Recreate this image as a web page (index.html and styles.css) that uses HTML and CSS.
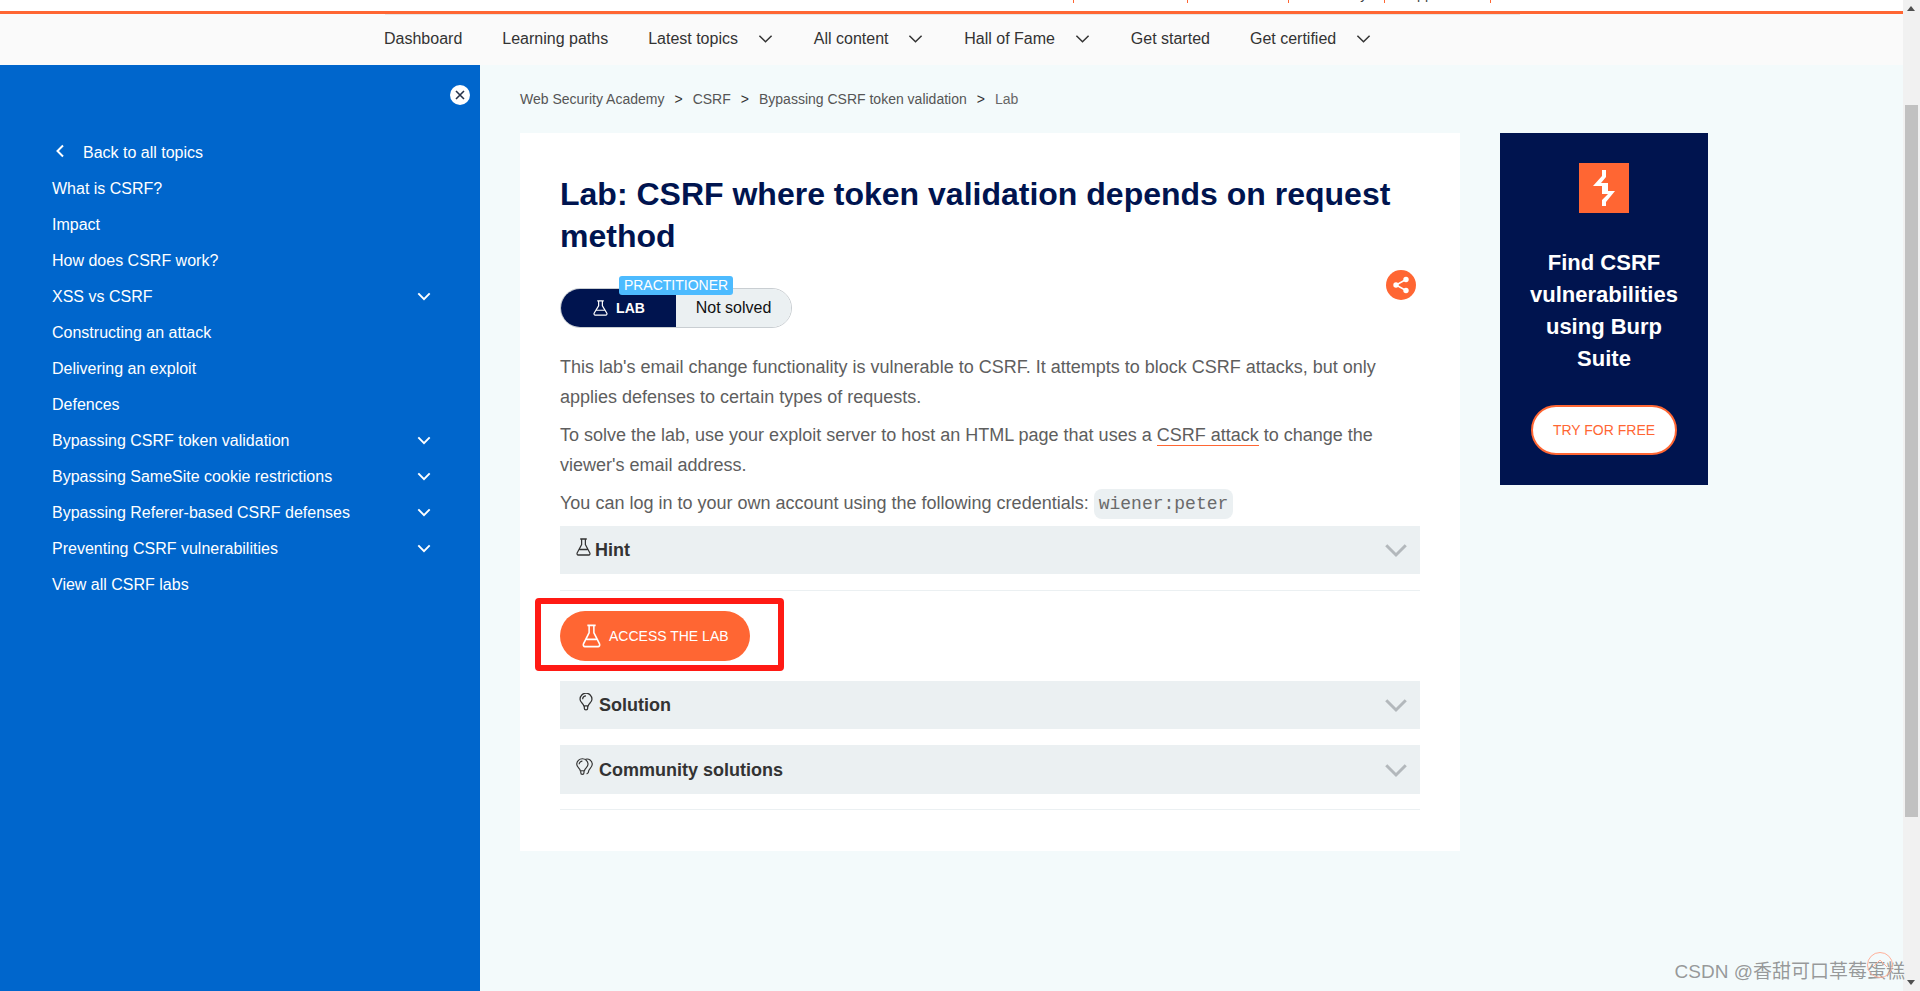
FILE: index.html
```html
<!DOCTYPE html>
<html lang="en">
<head>
<meta charset="utf-8">
<title>Lab: CSRF where token validation depends on request method</title>
<link rel="stylesheet" href="styles.css">
</head>
<body>
<svg class="defs" width="0" height="0" aria-hidden="true">
  <symbol id="flask" viewBox="0 0 16 18" preserveAspectRatio="none"><path d="M4.500 1h7M6 1v5.500L1.200 15a1.400 1.400 0 0 0 1.200 2h11.200a1.400 1.400 0 0 0 1.200-2L10 6.500V1M3.800 11.500h8.400" fill="none" stroke="currentColor" stroke-width="1.300"/></symbol>
  <symbol id="chev" viewBox="0 0 16 10"><path d="M1.500 1.500 8 8l6.500-6.500" fill="none" stroke="currentColor"/></symbol>
</svg>
<div class="window">
  <div class="page">
    <div class="topstrip">
      <span class="topitem w1"></span>
      <span class="topitem w2"></span>
      <span class="topitem w3"><span class="clipped">Academy</span></span>
      <span class="topitem w4"><span class="clipped">Support</span></span>
    </div>
    <nav class="mainnav">
      <a>Dashboard</a>
      <a>Learning paths</a>
      <a>Latest topics<svg class="navchev"><use href="#chev"/></svg></a>
      <a>All content<svg class="navchev"><use href="#chev"/></svg></a>
      <a>Hall of Fame<svg class="navchev"><use href="#chev"/></svg></a>
      <a>Get started</a>
      <a>Get certified<svg class="navchev"><use href="#chev"/></svg></a>
    </nav>
    <div class="body-row">
      <aside class="sidebar">
        <div class="closebar">
          <span class="close"><svg viewBox="0 0 20 20"><path d="M6 6l8 8M14 6l-8 8" stroke="#26324a" stroke-width="1.600" fill="none"/></svg></span>
        </div>
        <ul class="sidelist">
          <li class="back"><svg viewBox="0 0 10 14"><path d="M8 1.500 2.500 7 8 12.500" fill="none" stroke="#fff" stroke-width="2"/></svg>Back to all topics</li>
          <li>What is CSRF?</li>
          <li>Impact</li>
          <li>How does CSRF work?</li>
          <li>XSS vs CSRF<svg class="sidechev"><use href="#chev"/></svg></li>
          <li>Constructing an attack</li>
          <li>Delivering an exploit</li>
          <li>Defences</li>
          <li>Bypassing CSRF token validation<svg class="sidechev"><use href="#chev"/></svg></li>
          <li>Bypassing SameSite cookie restrictions<svg class="sidechev"><use href="#chev"/></svg></li>
          <li>Bypassing Referer-based CSRF defenses<svg class="sidechev"><use href="#chev"/></svg></li>
          <li>Preventing CSRF vulnerabilities<svg class="sidechev"><use href="#chev"/></svg></li>
          <li>View all CSRF labs</li>
        </ul>
      </aside>
      <main class="content">
        <div class="crumbs">
          <span>Web Security Academy</span><b>&gt;</b><span>CSRF</span><b>&gt;</b><span>Bypassing CSRF token validation</span><b>&gt;</b><span class="last">Lab</span>
        </div>
        <div class="columns">
          <article class="card">
            <h1>Lab: CSRF where token validation depends on request method</h1>
            <div class="statusrow">
              <div class="pill">
                <span class="level">PRACTITIONER</span>
                <span class="pill-lab"><svg class="pillflask"><use href="#flask"/></svg>LAB</span>
                <span class="pill-state">Not solved</span>
              </div>
              <span class="share"><svg viewBox="0 0 30 30"><g fill="#fff"><circle cx="20" cy="9.500" r="2.700"/><circle cx="20" cy="20.500" r="2.700"/><circle cx="10" cy="15" r="2.700"/></g><path d="M20 9.500 10 15l10 5.500" fill="none" stroke="#fff" stroke-width="1.500"/></svg></span>
            </div>
            <p class="first">This lab's email change functionality is vulnerable to CSRF. It attempts to block CSRF attacks, but only applies defenses to certain types of requests.</p>
            <p>To solve the lab, use your exploit server to host an HTML page that uses a <a class="link">CSRF attack</a> to change the viewer's email address.</p>
            <p class="creds">You can log in to your own account using the following credentials: <code>wiener:peter</code></p>
            <div class="acc">
              <span class="acc-title"><svg class="acc-flask"><use href="#flask"/></svg>Hint</span>
              <svg class="acc-chev"><use href="#chev"/></svg>
            </div>
            <div class="actions">
              <a class="access"><svg class="accessflask"><use href="#flask"/></svg>ACCESS THE LAB</a>
              <span class="redbox"></span>
            </div>
            <div class="acc">
              <span class="acc-title"><svg class="acc-bulb" viewBox="0 0 12 16"><path d="M4 11.500C4 9.500 .7 8.500 .7 5.500a5.300 5.300 0 0 1 10.600 0c0 3-3.300 4-3.300 6zM4.500 11.500v2a1.500 1.500 0 0 0 3 0v-2M3 5.500a3 3 0 0 1 3-3" fill="none" stroke="currentColor" stroke-width="1.100"/></svg>Solution</span>
              <svg class="acc-chev"><use href="#chev"/></svg>
            </div>
            <div class="acc acc-last">
              <span class="acc-title"><svg class="acc-bulb2" viewBox="0 0 16 16"><path d="M4 11.500C4 9.500 .7 8.500 .7 5.500a5.300 5.300 0 0 1 10.600 0c0 3-3.300 4-3.300 6zM4.500 11.500v2a1.500 1.500 0 0 0 3 0v-2M3 5.500a3 3 0 0 1 3-3M9 .7c3-1 6.300 1.300 6.300 4.800 0 3-2.800 4-3.300 6 0 1-.5 2.500-2 3" fill="none" stroke="currentColor" stroke-width="1.100"/></svg>Community solutions</span>
              <svg class="acc-chev"><use href="#chev"/></svg>
            </div>
            <hr class="enddiv">
          </article>
          <aside class="ad">
            <svg class="burp" viewBox="0 0 50 50"><rect width="50" height="50" fill="#ff6633"/><path fill="#fff" d="M23 7h4v7l-5 6h7v8h7l-9 11v4h-4v-6l6-6h-6v-8h-9l9-10z"/></svg>
            <h2>Find CSRF vulnerabilities using Burp Suite</h2>
            <a class="try">TRY FOR FREE</a>
          </aside>
        </div>
      </main>
    </div>
  </div>
  <div class="scrollbar">
    <span class="arrow up"></span>
    <span class="thumb"></span>
    <span class="arrow down"></span>
  </div>
</div>
<div class="watermark">CSDN @香甜可口草莓蛋糕<svg class="totop" viewBox="0 0 26 26"><circle cx="13" cy="13" r="12.500" fill="none" stroke="#ffb09a"/><path d="M6 15l7-7 7 7" fill="none" stroke="#ffb09a"/></svg></div>
</body>
</html>
```

FILE: styles.css
```css
* { box-sizing: border-box; }
html, body { margin: 0; height: 991px; overflow: hidden; }
body { font-family: "Liberation Sans", Arial, sans-serif; font-size: 16px; color: #333; background: #f3fafb; }
.defs { position: absolute; }
.window { display: flex; height: 991px; }
.page { flex: 1; min-width: 0; display: flex; flex-direction: column; }

.topstrip { height: 14px; flex: none; background: #fff; border-bottom: 3px solid #ff6633; display: flex; align-items: flex-start; padding-left: 1073px; }
.topitem { height: 3px; overflow: hidden; border-left: 1px solid #ff6633; font-size: 14px; line-height: 14px; color: #444; }
.w1 { width: 114px; }
.w2 { width: 101px; }
.w3 { width: 96px; padding-left: 20px; }
.w4 { width: 107px; padding-left: 15px; border-right: 1px solid #ff6633; }
.clipped { display: block; margin-top: -13px; }

.mainnav { height: 51px; flex: none; background: linear-gradient(#e6e6e6, #e6e6e6) 385px 0 / 1135px 1px no-repeat, #fafafa; display: flex; align-items: center; gap: 40px; padding: 0 0 2px 384px; color: #333; font-size: 16px; }
.mainnav a { display: flex; align-items: center; }
.navchev { width: 15px; height: 10px; margin: 0 0.800px 0 20px; color: #333; stroke-width: 1.600px; }

.body-row { flex: 1; display: flex; min-height: 0; }
.sidebar { width: 480px; flex: none; background: #0066cc; color: #fff; }
.closebar { display: flex; justify-content: flex-end; padding: 20px 10px 0 0; height: 60px; }
.close { width: 20px; height: 20px; border-radius: 50%; background: #fff; display: block; }
.close svg { display: block; width: 20px; height: 20px; }
.sidelist { list-style: none; margin: 10px 0 0; padding: 0 52px; }
.sidelist li { height: 36px; display: flex; align-items: center; position: relative; }
.back svg { width: 10px; height: 14px; margin: -4px 18px 0 3px; }
.sidechev { width: 14px; height: 9px; position: absolute; right: -3px; top: 13px; color: #fff; stroke-width: 2.200px; }

.content { flex: 1; min-width: 0; padding: 0 0 0 40px; }
.crumbs { height: 68px; display: flex; align-items: center; font-size: 14px; color: #555; }
.crumbs b { font-weight: normal; margin: 0 10px; color: #333; }
.crumbs .last { color: #666; }
.columns { display: flex; gap: 40px; align-items: flex-start; }

.card { width: 940px; height: 718px; background: #fff; padding: 40px; }
h1 { margin: 0; font-size: 32px; line-height: 42px; font-weight: bold; color: #00144f; }
.statusrow { display: flex; justify-content: space-between; margin-top: 31px; height: 40px; }
.pill { position: relative; display: flex; width: 232px; height: 40px; border: 1px solid #c9ced2; border-radius: 20px; }
.level { position: absolute; left: 58px; top: -13px; width: 114px; height: 19px; background: #4dbbff; color: #fff; border-radius: 3px; font-size: 14px; line-height: 19px; text-align: center; z-index: 1; }
.pill-lab { width: 115px; background: #00144f; color: #fff; font-weight: bold; font-size: 14px; border-radius: 20px 0 0 20px; display: flex; align-items: center; justify-content: center; }
.pillflask { width: 15px; height: 16px; margin-right: 8px; margin-left: 1px; }
.pill-state { flex: 1; background: #ebf0f2; color: #111; border-radius: 0 20px 20px 0; display: flex; align-items: center; justify-content: center; }
.share { width: 30px; height: 30px; border-radius: 50%; background: #ff6633; margin: -18px 4px 0 0; display: block; }
.share svg { display: block; width: 30px; height: 30px; }

p { margin: 0 0 8px; font-size: 18px; line-height: 30px; color: #5e5e5e; }
p.first { margin-top: 24px; }
p.creds { margin-bottom: 7px; }
.link { color: #5e5e5e; border-bottom: 1px solid #ff6633; }
code { font-family: "Liberation Mono", monospace; font-size: 18px; background: #ebf0f2; padding: 5px; border-radius: 8px; color: #6a6a6a; }

.acc { height: 48px; background: #ebf0f2; display: flex; align-items: center; justify-content: space-between; padding: 0 12px 0 16px; margin-bottom: 16px; }
.acc-title { font-size: 18px; font-weight: bold; color: #333; display: flex; align-items: center; }
.acc-flask { width: 15px; height: 18px; margin-right: 4px; margin-top: -6px; }
.acc-bulb { width: 14px; height: 18px; margin: -6px 6px 0 3px; }
.acc-bulb2 { width: 17px; height: 18px; margin: -6px 6px 0 0; }
.acc-chev { width: 24px; height: 15px; color: #b3b8bc; stroke-width: 2px; }
.acc-last { height: 49px; margin-bottom: 15px; padding-top: 1px; }

.actions { position: relative; border-top: 1px solid #ebf0f2; padding-top: 20px; height: 91px; }
.access { width: 190px; height: 50px; background: #ff6633; color: #fff; border-radius: 25px; font-size: 14px; display: flex; align-items: center; padding-left: 22px; }
.accessflask { width: 19px; height: 24px; margin-right: 8px; }
.redbox { position: absolute; left: -25px; top: 7px; width: 249px; height: 73px; border: 6px solid #ff1a14; border-radius: 4px; }
.enddiv { margin: 0; border: 0; border-top: 1px solid #ebf0f2; }

.ad { width: 208px; height: 352px; background: #00144f; color: #fff; display: flex; flex-direction: column; align-items: center; padding-top: 30px; }
.burp { width: 50px; height: 50px; display: block; }
.ad h2 { margin: 34px 0 0; font-size: 22px; line-height: 32px; width: 170px; text-align: center; font-weight: bold; }
.try { margin-top: 30px; width: 146px; height: 50px; border: 2px solid #ff6633; border-radius: 25px; background: #fff; color: #ff6633; font-size: 14px; display: flex; align-items: center; justify-content: center; }

.scrollbar { width: 17px; flex: none; background: #f1f1f1; position: relative; }
.thumb { position: absolute; top: 105px; left: 2px; width: 13px; height: 712px; background: #c1c1c1; }
.arrow { position: absolute; left: 4px; width: 0; height: 0; border-left: 4px solid transparent; border-right: 4px solid transparent; }
.up { top: 6px; border-bottom: 5px solid #505050; }
.down { bottom: 6px; border-top: 5px solid #505050; }

.watermark { position: absolute; right: 15px; bottom: 7px; font-family: "Liberation Sans", "Noto Sans CJK SC", sans-serif; font-size: 19px; line-height: 24px; color: rgba(110, 110, 110, 0.7); white-space: nowrap; }
.totop { position: absolute; right: 12px; top: -8px; width: 26px; height: 26px; }
```
